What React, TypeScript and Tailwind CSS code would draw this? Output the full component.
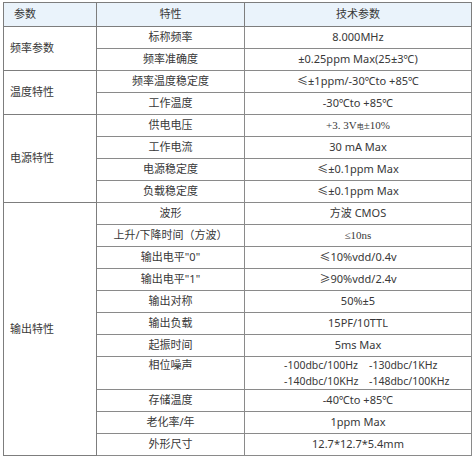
const rows: { group?: { name: string; span: number }; label: string; value: React.ReactNode; tall?: boolean }[] = [
  { group: { name: '频率参数', span: 2 }, label: '标称频率', value: '8.000MHz' },
  { label: '频率准确度', value: '±0.25ppm Max(25±3℃)' },
  { group: { name: '温度特性', span: 2 }, label: '频率温度稳定度', value: '≤±1ppm/-30℃to +85℃' },
  { label: '工作温度', value: '-30℃to +85℃' },
  {
    group: { name: '电源特性', span: 4 },
    label: '供电电压',
    value: (
      <span className="font-['Liberation_Serif','Noto_Sans_CJK_SC',serif]">
        +3. 3V<span className="text-[7px]">电</span>±10%
      </span>
    ),
  },
  { label: '工作电流', value: '30 mA Max' },
  { label: '电源稳定度', value: '≤±0.1ppm Max' },
  { label: '负载稳定度', value: '≤±0.1ppm Max' },
  { group: { name: '输出特性', span: 11 }, label: '波形', value: '方波 CMOS' },
  {
    label: '上升/下降时间（方波）',
    value: <span className="font-['Liberation_Serif','Noto_Sans_CJK_SC',serif]">≤10ns</span>,
  },
  { label: '输出电平"0"', value: '≤10%vdd/0.4v' },
  { label: '输出电平"1"', value: '≥90%vdd/2.4v' },
  { label: '输出对称', value: '50%±5' },
  { label: '输出负载', value: '15PF/10TTL' },
  { label: '起振时间', value: '5ms Max' },
  { label: '相位噪声', value: null, tall: true },
  { label: '存储温度', value: '-40℃to +85℃' },
  { label: '老化率/年', value: '1ppm Max' },
  { label: '外形尺寸', value: '12.7*12.7*5.4mm' },
];

function PhaseNoise() {
  return (
    <div className="grid grid-cols-[85px_auto] pl-[39px] text-left text-[10.5px] leading-[16px]">
      <span>-100dbc/100Hz</span>
      <span>-130dbc/1KHz</span>
      <span>-140dbc/10KHz</span>
      <span>-148dbc/100KHz</span>
    </div>
  );
}

export default function App() {
  return (
    <div className="w-[474px] h-[457px] bg-white pt-[2px] pl-[3px] font-['Noto_Sans','Noto_Sans_CJK_SC',sans-serif] text-[11px] text-[#383838]">
      <table className="table-fixed border-collapse w-[468px] border border-[#7d7d7d]">
        <colgroup>
          <col className="w-[93px]" />
          <col className="w-[148px]" />
          <col className="w-[227px]" />
        </colgroup>
        <thead>
          <tr className="h-[24px] bg-[#eaf3fb]">
            <th className="border border-[#7d7d7d] pl-[10px] text-left font-normal">参数</th>
            <th className="border border-[#7d7d7d] font-normal">特性</th>
            <th className="border border-[#7d7d7d] font-normal">技术参数</th>
          </tr>
        </thead>
        <tbody>
          {rows.map((r) => (
            <tr key={r.label} className={r.tall ? 'h-[32px]' : 'h-[22px]'}>
              {r.group && (
                <td rowSpan={r.group.span} className="border border-[#7d7d7d] pl-[6px] align-middle">
                  {r.group.name}
                </td>
              )}
              <td
                className={
                  r.tall
                    ? 'border border-[#8a8a8a] p-0 text-center align-top leading-[16px]'
                    : 'border border-[#8a8a8a] p-0 text-center'
                }
              >
                {r.label}
              </td>
              <td className={r.tall ? 'border border-[#8a8a8a] p-0 align-top' : 'border border-[#8a8a8a] p-0 text-center'}>
                {r.tall ? <PhaseNoise /> : r.value}
              </td>
            </tr>
          ))}
        </tbody>
      </table>
    </div>
  );
}
